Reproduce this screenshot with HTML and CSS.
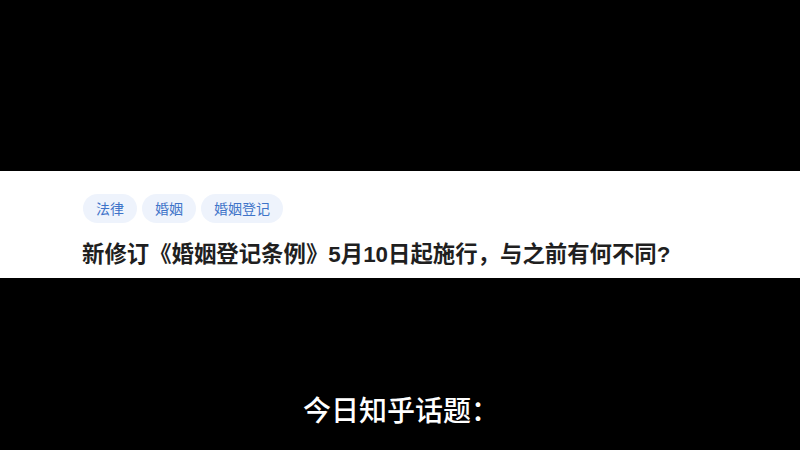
FILE: index.html
```html
<!DOCTYPE html>
<html lang="zh">
<head>
<meta charset="utf-8">
<link rel="stylesheet" href="styles.css">
</head>
<body>
<div class="screen">
  <div class="top-black"></div>
  <section class="card">
    <div class="tags">
      <span class="tag">法律</span>
      <span class="tag">婚姻</span>
      <span class="tag">婚姻登记</span>
    </div>
    <h1 class="title">新修订《婚姻登记条例》5月10日起施行，与之前有何不同?</h1>
  </section>
  <div class="bottom-black">
    <p class="caption">今日知乎话题：</p>
  </div>
</div>
</body>
</html>
```
FILE: styles.css
```css
html, body {
  margin: 0;
  padding: 0;
  background: #000;
}
.screen {
  width: 800px;
  height: 450px;
  display: flex;
  flex-direction: column;
  background: #000;
  overflow: hidden;
}
.top-black {
  height: 171px;
  flex: none;
}
.card {
  height: 107px;
  flex: none;
  background: #fff;
  box-sizing: border-box;
  padding: 23px 0 0 83px;
  font-family: "Noto Sans CJK SC", "Noto Sans", sans-serif;
}
.tags {
  display: flex;
  gap: 5px;
}
.tag {
  height: 29px;
  line-height: 29px;
  padding: 0 13px;
  border-radius: 15px;
  background: #eef3fc;
  color: #3f74c9;
  font-size: 14px;
}
.title {
  margin: 17px 0 0 -1px;
  font-family: "Liberation Sans", "Noto Sans CJK SC", sans-serif;
  font-size: 22.4px;
  line-height: 30px;
  font-weight: 700;
  color: #1f1f1f;
}
.bottom-black {
  flex: 1;
  display: flex;
  justify-content: center;
}
.caption {
  margin: 113px 0 0 2px;
  color: #fff;
  font-family: "Noto Sans CJK SC", sans-serif;
  font-size: 28px;
  line-height: 36px;
  font-weight: 500;
}
```
